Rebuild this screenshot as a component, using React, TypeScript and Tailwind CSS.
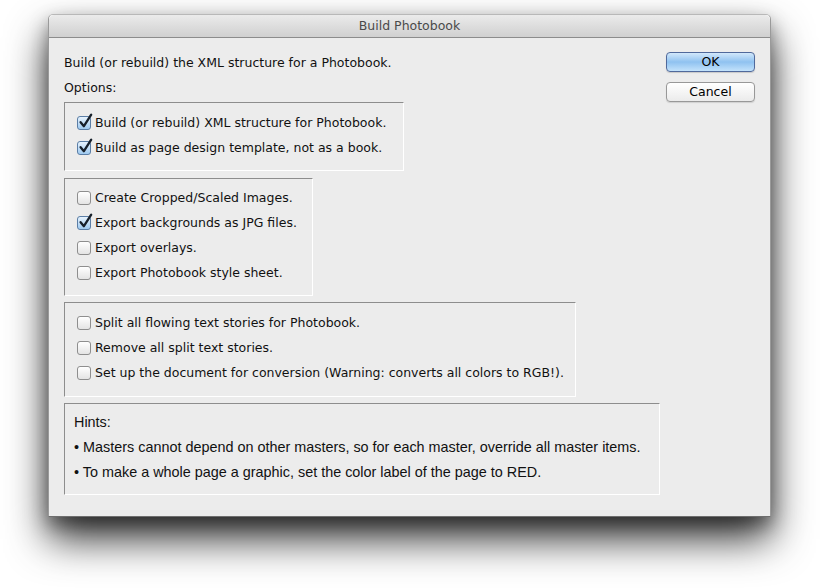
import clsx from "clsx";

const ui = { fontFamily: '"DejaVu Sans", "Noto Sans", sans-serif' };
const hintFont = { fontFamily: '"Liberation Sans", Arial, sans-serif' };

const Check = ({ checked }: { checked: boolean }) => (
	<span className="relative mr-[4px] inline-block h-[14px] w-[14px] shrink-0">
		<span
			className={clsx(
				"absolute inset-0 rounded-[3px] border",
				checked
					? "border-[#5b7ea6] bg-linear-to-b from-[#e6f2fd] to-[#9fcaf0]"
					: "border-[#8e8e8e] bg-linear-to-b from-white to-[#e4e4e4]"
			)}
		/>
		{checked && (
			<svg className="absolute -top-[3px] left-[1px] h-[16px] w-[15px]" viewBox="0 0 15 16">
				<path
					d="M2.6 9.2 L5.9 13.2 L13.2 1.6"
					stroke="#17202b"
					strokeWidth="2.3"
					fill="none"
					strokeLinecap="round"
					strokeLinejoin="round"
				/>
			</svg>
		)}
	</span>
);

const Option = ({ label, checked = false }: { label: string; checked?: boolean }) => (
	<div className="flex h-[25px] items-center pt-[1px]">
		<Check checked={checked} />
		<span>{label}</span>
	</div>
);

const groupBox = "border border-t-[#8d8d8d] border-l-[#8d8d8d] border-r-white border-b-white";

const App = () => {
	return (
		<div className="h-[588px] w-[820px] overflow-hidden bg-white pl-[48px] pt-[14px] text-[12.5px] text-[#111]" style={ui}>
			<div className="flex h-[503px] w-[723px] flex-col rounded-t-[5px] border border-[#9a9a9a] border-b-[#6e6e6e] border-t-[#b8b8b8] shadow-[0_22px_40px_rgba(0,0,0,0.8),0_8px_18px_rgba(0,0,0,0.35)]">
				<div className="flex h-[23px] shrink-0 items-center justify-center rounded-t-[5px] border-b border-[#8c8c8c] bg-linear-to-b from-[#ebebeb] to-[#d0d0d0] pt-[1px] text-[#4a4a4a]">
					Build Photobook
				</div>
				<div className="flex flex-1 bg-[#ececec] pl-[15px] pt-[12px]">
					<div className="w-[596px]">
						<div className="flex h-[25px] items-center pt-[1px]">Build (or rebuild) the XML structure for a Photobook.</div>
						<div className="flex h-[25px] items-center pt-[1px]">Options:</div>

						<div className={clsx(groupBox, "mt-[2px] w-[340px] pb-[10px] pl-[12px] pt-[7px]")}>
							<Option label="Build (or rebuild) XML structure for Photobook." checked />
							<Option label="Build as page design template, not as a book." checked />
						</div>

						<div className={clsx(groupBox, "mt-[7px] w-[249px] pb-[10px] pl-[12px] pt-[6px]")}>
							<Option label="Create Cropped/Scaled Images." />
							<Option label="Export backgrounds as JPG files." checked />
							<Option label="Export overlays." />
							<Option label="Export Photobook style sheet." />
						</div>

						<div className={clsx(groupBox, "mt-[6px] w-[512px] pb-[11px] pl-[12px] pt-[7px]")}>
							<Option label="Split all flowing text stories for Photobook." />
							<Option label="Remove all split text stories." />
							<Option label="Set up the document for conversion (Warning: converts all colors to RGB!)." />
						</div>

						<div className={clsx(groupBox, "mt-[6px] w-[596px] pb-[9px] pl-[9px] pt-[6px] text-[14.4px]")} style={hintFont}>
							<div className="flex h-[25px] items-center pt-[1px]">Hints:</div>
							<div className="flex h-[25px] items-center pt-[1px]">• Masters cannot depend on other masters, so for each master, override all master items.</div>
							<div className="flex h-[25px] items-center pt-[1px]">• To make a whole page a graphic, set the color label of the page to RED.</div>
						</div>
					</div>

					<div className="ml-[6px] flex w-[89px] flex-col gap-[10px] pt-[2px]">
						<button className="h-[20px] w-[89px] rounded-[4px] border border-[#50699b] bg-linear-to-b from-[#d2e8fb] via-[#8fc2f0] to-[#c3e2fb] pt-[1px] leading-none text-black shadow-[0_1px_1px_rgba(0,0,0,0.15)]">
							OK
						</button>
						<button className="h-[20px] w-[89px] rounded-[4px] border border-[#989898] bg-linear-to-b from-white to-[#ebebeb] pt-[1px] leading-none text-black shadow-[0_1px_1px_rgba(0,0,0,0.12)]">
							Cancel
						</button>
					</div>
				</div>
			</div>
		</div>
	);
};

export default App;
